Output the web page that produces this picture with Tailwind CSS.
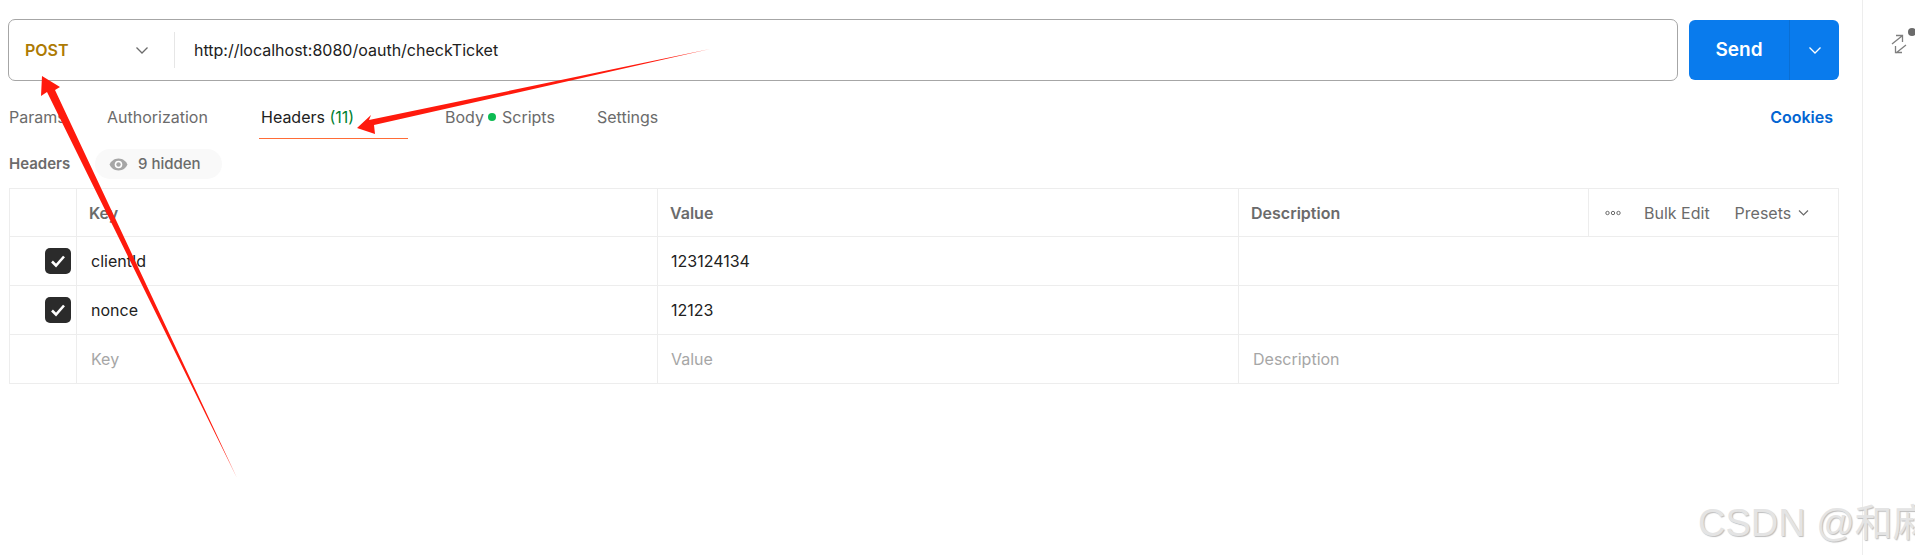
<!DOCTYPE html>
<html>
<head>
<meta charset="utf-8">
<script src="https://cdn.jsdelivr.net/npm/@tailwindcss/browser@4"></script>
</head>
<body class="bg-white">
<div class="relative flex w-[1915px] h-[555px] overflow-hidden bg-white font-['Inter','Noto_Sans_CJK_SC',sans-serif] text-[#212121]">
  <main class="w-[1862px] shrink-0 pt-[19px] pl-[8px] pr-[23px]">
    <!-- URL bar -->
    <div class="flex gap-[11px] h-[62px]">
      <div class="flex-1 flex items-center border border-[#a6a6a6] rounded-[7px]">
        <div class="w-[166px] h-[36px] flex items-center justify-between pl-[16px] pr-[24px] border-r border-[#e6e6e6]">
          <span class="text-[16px] font-semibold text-[#ad7a03]">POST</span>
          <svg width="16" height="16" viewBox="0 0 16 16" fill="none" stroke="#6b6b6b" stroke-width="1.3"><path d="M2.5 5.5 8 11l5.5-5.5"/></svg>
        </div>
        <span class="pl-[19px] text-[16px]">http://localhost:8080/oauth/checkTicket</span>
      </div>
      <div class="w-[150px] h-[60px] mt-[1px] flex rounded-[6px] bg-[#097bed] text-white">
        <div class="w-[101px] flex items-center justify-center border-r border-[#0a6fd4] text-[19px] font-semibold">Send</div>
        <div class="flex-1 flex items-center justify-center">
          <svg width="14" height="14" viewBox="0 0 14 14" fill="none" stroke="#fff" stroke-width="1.3"><path d="M1.5 4.5 7 10l5.5-5.5"/></svg>
        </div>
      </div>
    </div>
    <!-- Tabs -->
    <div class="flex items-start justify-between h-[58px] pr-[6px]">
      <div class="flex text-[16px] text-[#6b6b6b]">
        <span class="w-[98px] h-[58px] pt-[24px] pl-[1px]">Params</span>
        <span class="w-[153px] h-[58px] pt-[24px] pl-[1px]">Authorization</span>
        <span class="w-[149px] h-[58px] pt-[24px] pl-[2px] border-b border-[#ff6c37] text-[#212121] relative">Headers <span class="text-[#007f31]">(11)</span></span>
        <span class="w-[94px] h-[58px] pt-[24px] pl-[37px] flex items-start gap-[4px]">Body<span class="mt-[8px] size-[8px] rounded-full bg-[#0cbb52]"></span></span>
        <span class="w-[95px] h-[58px] pt-[24px]">Scripts</span>
        <span class="h-[58px] pt-[24px]">Settings</span>
      </div>
      <span class="pt-[24px] text-[16px] font-semibold text-[#0265d2]">Cookies</span>
    </div>
    <!-- Headers label -->
    <div class="flex items-center h-[30px] mt-[10px] pl-[1px]">
      <span class="w-[86px] text-[15px] font-semibold text-[#6b6b6b]">Headers</span>
      <span class="w-[127px] h-[30px] flex items-center gap-[10px] pl-[14px] rounded-full bg-[#f9f9f9] text-[15px] font-medium text-[#6b6b6b]">
        <svg width="19" height="13" viewBox="0 0 19 13"><path d="M9.5 0.5C5 .5 1.800 3.500 .5 6.500 1.800 9.500 5 12.500 9.500 12.500S17.200 9.500 18.500 6.500C17.200 3.500 14 .5 9.500 .5Z" fill="#a6a6a6"/><circle cx="9.500" cy="6.500" r="3.800" fill="#fff"/><circle cx="9.500" cy="6.500" r="2.200" fill="#a6a6a6"/></svg>
        9 hidden
      </span>
    </div>
    <!-- Table -->
    <div class="mt-[9px] ml-[1px] border border-[#ededed] text-[16px] grid grid-cols-[67px_581px_581px_350px_1fr] grid-rows-[48px_49px_49px_48px]">
      <div class="border-r border-b border-[#ededed]"></div>
      <div class="border-r border-b border-[#ededed] flex items-center pl-[12px] font-semibold text-[#6b6b6b]">Key</div>
      <div class="border-r border-b border-[#ededed] flex items-center pl-[12px] font-semibold text-[#6b6b6b]">Value</div>
      <div class="border-r border-b border-[#ededed] flex items-center pl-[12px] font-semibold text-[#6b6b6b]">Description</div>
      <div class="border-b border-[#ededed] flex items-center text-[#6b6b6b] pl-[16px]">
        <svg width="16" height="6" viewBox="0 0 16 6" fill="none" stroke="#6b6b6b" stroke-width="1"><circle cx="2.500" cy="3" r="1.700"/><circle cx="8" cy="3" r="1.700"/><circle cx="13.500" cy="3" r="1.700"/></svg>
        <span class="ml-[23px]">Bulk Edit</span>
        <span class="ml-[25px]">Presets</span>
        <svg class="ml-[7px]" width="11" height="11" viewBox="0 0 11 11" fill="none" stroke="#6b6b6b" stroke-width="1.200"><path d="M1 3.500 5.500 8 10 3.500"/></svg>
      </div>

      <div class="border-r border-b border-[#ededed] flex items-center justify-end pr-[5px]">
        <span class="size-[26px] rounded-[5px] bg-[#2b2b2b] flex items-center justify-center">
          <svg width="16" height="16" viewBox="0 0 16 16" fill="none" stroke="#fff" stroke-width="2.600"><path d="M2 8.500 6 12.500 14 3.500"/></svg>
        </span>
      </div>
      <div class="border-r border-b border-[#ededed] flex items-center pl-[14px]">clientId</div>
      <div class="border-r border-b border-[#ededed] flex items-center pl-[13px]">123124134</div>
      <div class="col-span-2 border-b border-[#ededed]"></div>

      <div class="border-r border-b border-[#ededed] flex items-center justify-end pr-[5px]">
        <span class="size-[26px] rounded-[5px] bg-[#2b2b2b] flex items-center justify-center">
          <svg width="16" height="16" viewBox="0 0 16 16" fill="none" stroke="#fff" stroke-width="2.600"><path d="M2 8.500 6 12.500 14 3.500"/></svg>
        </span>
      </div>
      <div class="border-r border-b border-[#ededed] flex items-center pl-[14px]">nonce</div>
      <div class="border-r border-b border-[#ededed] flex items-center pl-[13px]">12123</div>
      <div class="col-span-2 border-b border-[#ededed]"></div>

      <div class="border-r border-[#ededed]"></div>
      <div class="border-r border-[#ededed] flex items-center pl-[14px] text-[#a6a6a6]">Key</div>
      <div class="border-r border-[#ededed] flex items-center pl-[13px] text-[#a6a6a6]">Value</div>
      <div class="col-span-2 flex items-center pl-[14px] text-[#a6a6a6]">Description</div>
    </div>
  </main>
  <!-- Right rail -->
  <aside class="flex-1 border-l border-[#ededed] relative">
    <svg class="absolute left-[28px] top-[34px]" width="16" height="20" viewBox="0 0 16 20" fill="none" stroke="#7f7f7f" stroke-width="1.300"><path d="M1 10 11 2M5 1.500h6.500V8M15 11 5 19M11 18.500H4.500V12"/></svg>
    <span class="absolute left-[45px] top-[28px] size-[8px] rounded-full bg-[#6b6b6b]"></span>
  </aside>

  <!-- Annotation arrows -->
  <svg class="absolute inset-0 pointer-events-none" width="1915" height="555" viewBox="0 0 1915 555">
    <polygon points="42,76 60,87 55,90 237,478 47,92 41,96" fill="#ff1a0d"/>
    <polygon points="357,128 371,115 369,120 710,49 374,125 375,134" fill="#ff1a0d"/>
  </svg>
  <!-- Watermark -->
  <span class="absolute left-[1698px] top-[498px] text-[38px] leading-[50px] whitespace-nowrap font-['Liberation_Sans','Noto_Sans_CJK_SC',sans-serif] text-[#e4e4e4] [text-shadow:1px_1px_1px_#bdbdbd]">CSDN @和麻</span>
</div>
</body>
</html>
